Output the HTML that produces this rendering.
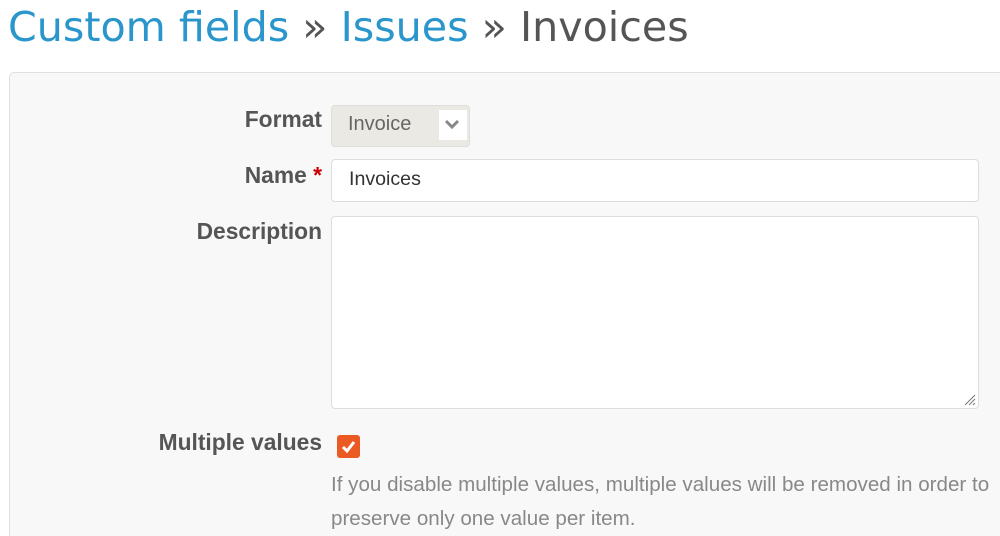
<!DOCTYPE html>
<html><head><style>
html,body{margin:0;background:#fff;width:1000px;height:536px;overflow:hidden}
body{position:relative;font-family:"Liberation Sans",sans-serif}
h2{position:absolute;left:8px;top:0;margin:0;font-family:"DejaVu Sans",sans-serif;font-weight:normal;font-size:41.2px;line-height:54px;color:#555;white-space:nowrap}
h2 a{color:#2a96cc;text-decoration:none}
.panel{position:absolute;left:9px;top:72px;width:1010px;height:480px;background:#f8f8f8;border:1px solid #e0e0e0;border-radius:5px}
.lbl{position:absolute;right:678px;font-weight:bold;font-size:22.8px;color:#555;white-space:nowrap}
.box{position:absolute;background:#fff;border:1px solid #ddd;border-radius:4px;box-sizing:border-box}
</style></head><body>
<h2><a>Custom fields</a> » <a>Issues</a> » Invoices</h2>
<div class="panel"></div>
<div class="lbl" style="top:106px">Format</div>
<div class="lbl" style="top:162px">Name <span style="color:#c00">*</span></div>
<div class="lbl" style="top:218px">Description</div>
<div class="lbl" style="top:429px">Multiple values</div>
<div class="box" style="left:331px;top:105px;width:139px;height:42px;background:#eae9e4;border-color:#ddd"></div>
<div style="position:absolute;left:348px;top:113px;font-size:20px;color:#666">Invoice</div>
<div style="position:absolute;left:439px;top:110px;width:28px;height:30px;background:#fff"></div>
<svg style="position:absolute;left:443px;top:117px" width="18" height="14"><path d="M3 4 L9 10 L15 4" stroke="#888" stroke-width="3" fill="none"/></svg>
<div class="box" style="left:331px;top:159px;width:648px;height:43px"></div>
<div style="position:absolute;left:349px;top:168px;font-size:19.6px;color:#333">Invoices</div>
<div class="box" style="left:331px;top:216px;width:648px;height:193px"></div>
<svg style="position:absolute;left:963px;top:393px" width="14" height="14"><path d="M12 2L2 12M12 6L6 12M12 10L10 12" stroke="#777" stroke-width="1"/></svg>
<div style="position:absolute;left:337px;top:435px;width:23px;height:23px;background:#ec5a24;border-radius:3px"></div>
<svg style="position:absolute;left:337px;top:435px" width="23" height="23"><path d="M6 12 L10 16 L17 7" stroke="#fff" stroke-width="3" fill="none"/></svg>
<div style="position:absolute;left:331px;top:468px;font-size:20.6px;line-height:34px;color:#888;width:690px;white-space:nowrap">If you disable multiple values, multiple values will be removed in order to<br>preserve only one value per item.</div>
</body></html>
